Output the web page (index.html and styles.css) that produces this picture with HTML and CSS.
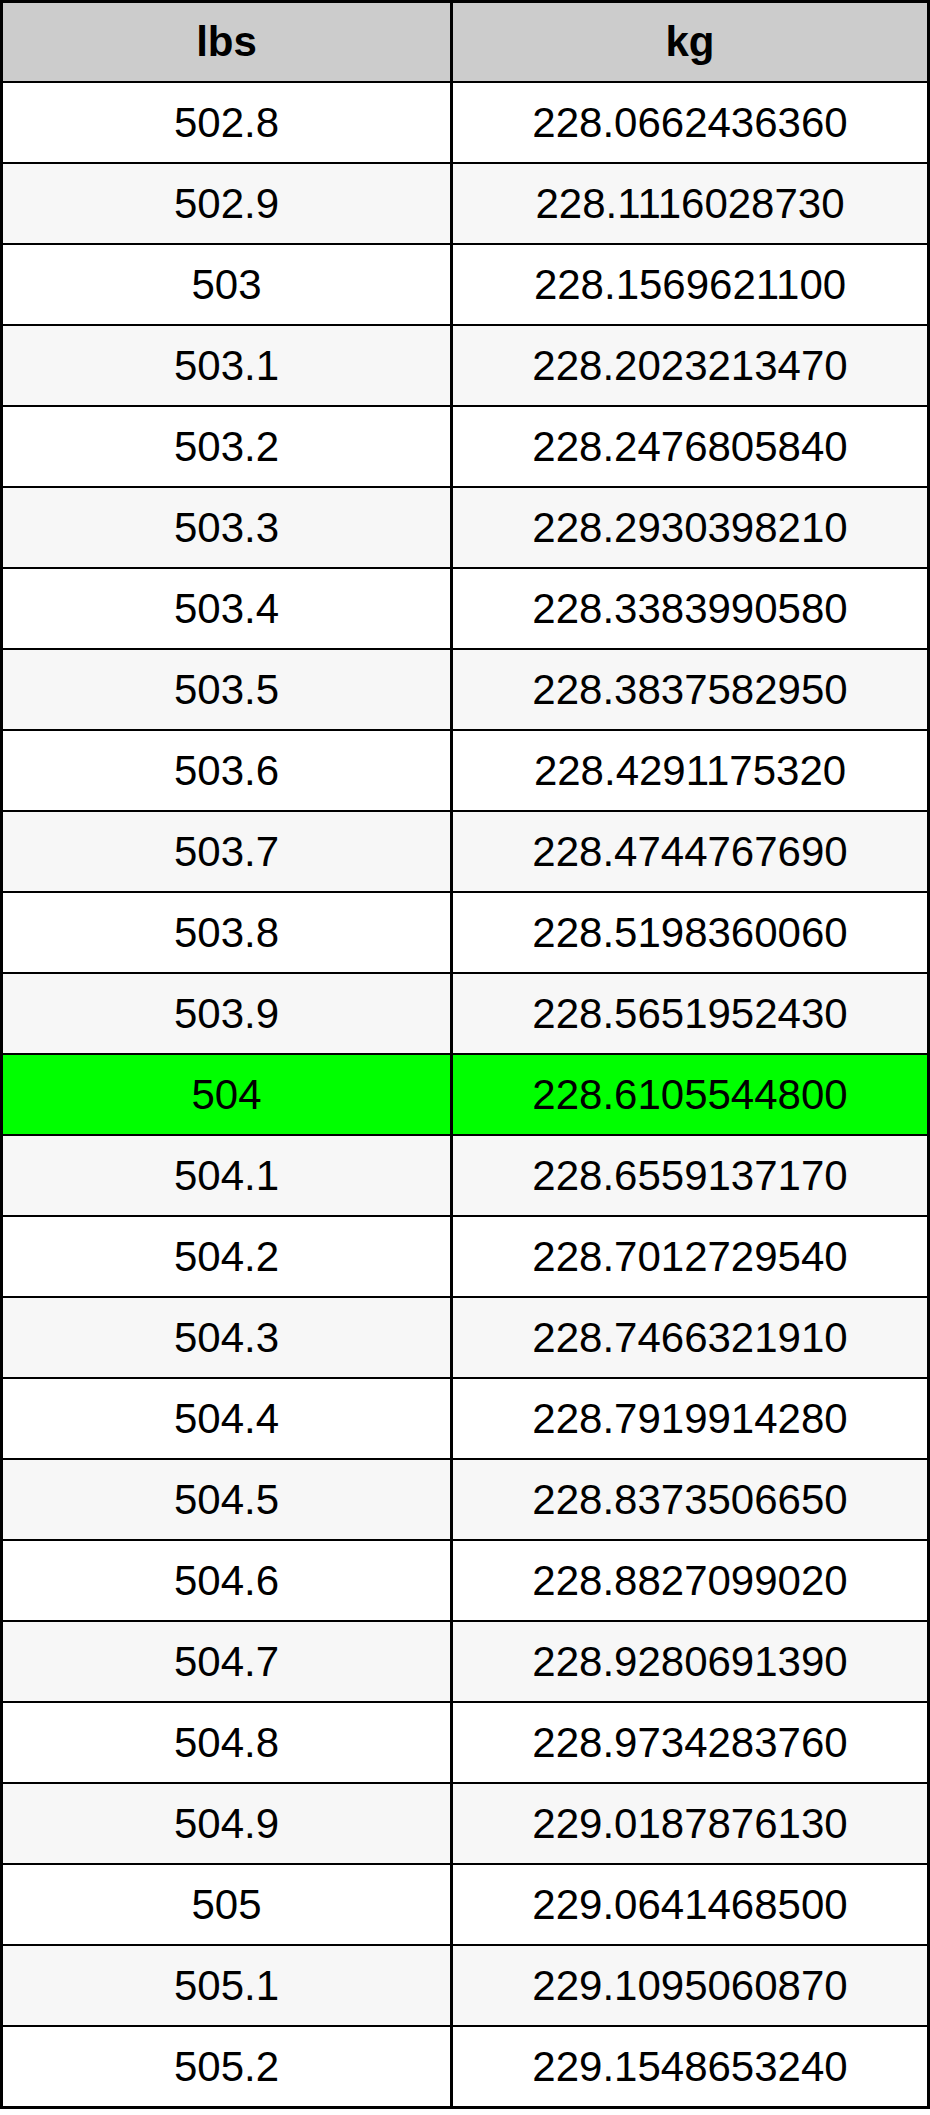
FILE: index.html
```html
<!DOCTYPE html>
<html>
<head>
<meta charset="utf-8">
<link rel="stylesheet" href="styles.css">
</head>
<body>
<table class="conv">
<thead>
<tr><th class="c-lbs">lbs</th><th class="c-kg">kg</th></tr>
</thead>
<tbody>
<tr><td class="c-lbs">502.8</td><td class="c-kg">228.0662436360</td></tr>
<tr class="alt"><td class="c-lbs">502.9</td><td class="c-kg">228.1116028730</td></tr>
<tr><td class="c-lbs">503</td><td class="c-kg">228.1569621100</td></tr>
<tr class="alt"><td class="c-lbs">503.1</td><td class="c-kg">228.2023213470</td></tr>
<tr><td class="c-lbs">503.2</td><td class="c-kg">228.2476805840</td></tr>
<tr class="alt"><td class="c-lbs">503.3</td><td class="c-kg">228.2930398210</td></tr>
<tr><td class="c-lbs">503.4</td><td class="c-kg">228.3383990580</td></tr>
<tr class="alt"><td class="c-lbs">503.5</td><td class="c-kg">228.3837582950</td></tr>
<tr><td class="c-lbs">503.6</td><td class="c-kg">228.4291175320</td></tr>
<tr class="alt"><td class="c-lbs">503.7</td><td class="c-kg">228.4744767690</td></tr>
<tr><td class="c-lbs">503.8</td><td class="c-kg">228.5198360060</td></tr>
<tr class="alt"><td class="c-lbs">503.9</td><td class="c-kg">228.5651952430</td></tr>
<tr class="hl"><td class="c-lbs">504</td><td class="c-kg">228.6105544800</td></tr>
<tr class="alt"><td class="c-lbs">504.1</td><td class="c-kg">228.6559137170</td></tr>
<tr><td class="c-lbs">504.2</td><td class="c-kg">228.7012729540</td></tr>
<tr class="alt"><td class="c-lbs">504.3</td><td class="c-kg">228.7466321910</td></tr>
<tr><td class="c-lbs">504.4</td><td class="c-kg">228.7919914280</td></tr>
<tr class="alt"><td class="c-lbs">504.5</td><td class="c-kg">228.8373506650</td></tr>
<tr><td class="c-lbs">504.6</td><td class="c-kg">228.8827099020</td></tr>
<tr class="alt"><td class="c-lbs">504.7</td><td class="c-kg">228.9280691390</td></tr>
<tr><td class="c-lbs">504.8</td><td class="c-kg">228.9734283760</td></tr>
<tr class="alt"><td class="c-lbs">504.9</td><td class="c-kg">229.0187876130</td></tr>
<tr><td class="c-lbs">505</td><td class="c-kg">229.0641468500</td></tr>
<tr class="alt"><td class="c-lbs">505.1</td><td class="c-kg">229.1095060870</td></tr>
<tr class="last"><td class="c-lbs">505.2</td><td class="c-kg">229.1548653240</td></tr>
</tbody>
</table>
</body>
</html>
```
FILE: styles.css
```css
html, body {
  margin: 0;
  padding: 0;
  background: #fff;
}

.conv {
  border-collapse: separate;
  border-spacing: 0;
  border: 3px solid #000;
  width: 930px;
  table-layout: fixed;
  font-family: "Liberation Sans", Arial, sans-serif;
  font-size: 42px;
  color: #000;
}

.conv th,
.conv td {
  padding: 0;
  text-align: center;
  vertical-align: middle;
  border-bottom: 2px solid #000;
  line-height: 48px;
}

.conv th {
  background: #cccccc;
  font-weight: bold;
  height: 78px;
}

.conv td {
  height: 79px;
  background: #fff;
}

.conv .c-lbs {
  width: 447px;
  border-right: 3px solid #000;
}

.conv .c-kg {
  width: 474px;
}

.conv tr.alt td {
  background: #f7f7f7;
}

.conv tr.hl td {
  background: #00ff00;
}

.conv tr.last td {
  border-bottom: none;
}
```
